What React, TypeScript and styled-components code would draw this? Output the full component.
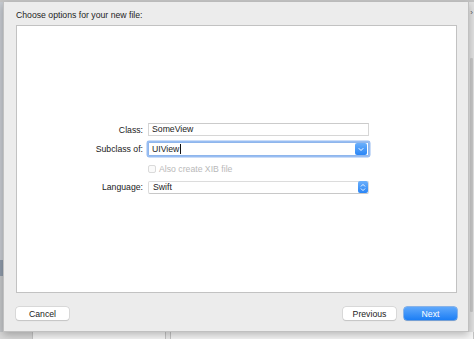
import React from "react";
import styled, { createGlobalStyle } from "styled-components";

const Global = createGlobalStyle`
  html, body { margin: 0; padding: 0; background: #d4d4d4; }
  body { font-family: "Liberation Sans", Arial, sans-serif; -webkit-font-smoothing: antialiased; }
  * { box-sizing: border-box; }
`;

const Page = styled.div`
  width: 474px;
  height: 339px;
  display: flex;
  flex-direction: column;
  overflow: hidden;
  background: #d2d2d2;
`;

const TopStrip = styled.div`
  height: 2px;
  flex: none;
  background: #c4c4c4;
`;

const Middle = styled.div`
  display: flex;
  flex: none;
  height: 330px;
`;

const LeftEdge = styled.div`
  width: 3px;
  flex: none;
  display: grid;
  grid-template-rows: 258px 16px 1fr;
  background: #c6cad0;
`;

const EdgeBand = styled.div<{ $tone: string }>`
  background: ${(p) => p.$tone};
`;

const RightEdge = styled.div`
  flex: 1;
  display: flex;
  flex-direction: column;
  align-items: flex-end;
  background: #e2e2e2;
  padding: 6px 1px 20px 0;
`;

const EdgeGlyph = styled.div`
  font-size: 8px;
  line-height: 10px;
  color: #555;
  font-family: "Liberation Sans", Arial, sans-serif;
  margin-bottom: 40px;
`;

const EdgeBar = styled.div`
  width: 3px;
  flex: 1;
  background: #c9c9c9;
  border-radius: 1px;
`;

const Dialog = styled.div`
  width: 466px;
  flex: none;
  background: #ececec;
  border: 1px solid #c0c0c0;
  border-top: none;
  box-shadow: 0 3px 8px rgba(0, 0, 0, 0.25);
  display: flex;
  flex-direction: column;
  padding: 0 11px 0 12px;
  position: relative;
  z-index: 1;
`;

const Title = styled.div`
  padding-top: 8px;
  font-size: 8.7px;
  line-height: 11px;
  height: 19px;
  color: #1e1e1e;
  margin-bottom: 4px;
`;

const ContentBox = styled.div`
  height: 268px;
  background: #ffffff;
  border: 1px solid #c2c2c2;
  padding-top: 94px;
`;

const Form = styled.div`
  display: grid;
  grid-template-columns: 126px 221px;
  grid-template-rows: 19px 19px 20px 18px;
  column-gap: 5px;
  align-items: center;
`;

const Label = styled.div`
  font-size: 8.7px;
  color: #222;
  text-align: right;
`;

const TextField = styled.div`
  height: 13px;
  background: #fff;
  border: 1px solid #d6d6d6;
  border-top-color: #cbcbcb;
  font-size: 8.7px;
  line-height: 11px;
  color: #222;
  padding-left: 3px;
`;

const ComboField = styled.div`
  height: 14px;
  display: flex;
  align-items: stretch;
  background: #fff;
  border: 1px solid #8fb6ec;
  box-shadow: 0 0 0 1.5px rgba(118, 167, 238, 0.75);
  border-radius: 1px;
  font-size: 8.7px;
  color: #222;
  margin-top: 1px;
`;

const ComboText = styled.div`
  flex: 1;
  padding-left: 3px;
  line-height: 12px;
  display: flex;
  align-items: center;
`;

const Caret = styled.span`
  display: inline-block;
  width: 1px;
  height: 10px;
  background: #111;
  margin-left: 0.5px;
`;

const BlueButton = styled.div<{ $w: number }>`
  width: ${(p) => p.$w}px;
  flex: none;
  background: linear-gradient(#6cb0fb, #2a86f6);
  border-radius: 2px;
  display: flex;
  align-items: center;
  justify-content: center;
  margin: 0 1px 0 0;
`;

const CheckRow = styled.div`
  display: flex;
  align-items: center;
  gap: 3px;
  margin-top: 1px;
`;

const Checkbox = styled.div`
  width: 8px;
  height: 8px;
  border: 1px solid #dadada;
  border-radius: 2px;
  background: #fafafa;
`;

const DisabledText = styled.div`
  font-size: 8.7px;
  color: #b9b9b9;
`;

const Popup = styled.div`
  height: 13px;
  display: flex;
  align-items: center;
  background: #fff;
  border: 1px solid #dcdcdc;
  border-bottom-color: #c8c8c8;
  border-radius: 2px;
  font-size: 8.7px;
  color: #222;
  padding: 0 0 0 4px;
`;

const PopupText = styled.div`
  flex: 1;
`;

const Stepper = styled.div`
  width: 10px;
  height: 12px;
  flex: none;
  background: linear-gradient(#6cb0fb, #2a86f6);
  border-radius: 2px;
  display: flex;
  align-items: center;
  justify-content: center;
`;

const ButtonRow = styled.div`
  display: flex;
  align-items: center;
  margin-top: 14px;
  gap: 8px;
`;

const Spacer = styled.div`
  flex: 1;
`;

const PushButton = styled.div<{ $primary?: boolean }>`
  width: 53px;
  height: 13px;
  border-radius: 3px;
  display: flex;
  align-items: center;
  justify-content: center;
  font-size: 8.7px;
  color: ${(p) => (p.$primary ? "#fff" : "#222")};
  background: ${(p) => (p.$primary ? "linear-gradient(#5fa8fb, #1c7ef5)" : "#ffffff")};
  box-shadow: ${(p) =>
    p.$primary
      ? "0 0 0 0.5px #2a7fe8, 0 0.5px 1px rgba(0,0,0,0.2)"
      : "0 0 0 0.5px #c8c8c8, 0 0.5px 1px rgba(0,0,0,0.18)"};
`;

const BottomStrip = styled.div`
  flex: 1;
  display: grid;
  grid-template-columns: 33px 133px 5px 1fr;
  background: #f4f4f4;
`;

const BottomCell = styled.div<{ $bg: string }>`
  background: ${(p) => p.$bg};
  border-right: 1px solid #c4c4c4;
`;

const DownChevron = () => (
  <svg width="6" height="5" viewBox="0 0 6 5">
    <path d="M1 1.5 L3 3.5 L5 1.5" stroke="#fff" strokeWidth="1" fill="none" strokeLinecap="round" />
  </svg>
);

const UpDownChevron = () => (
  <svg width="6" height="9" viewBox="0 0 6 9">
    <path d="M1.2 3.2 L3 1.4 L4.8 3.2 M1.2 5.8 L3 7.6 L4.8 5.8" stroke="#fff" strokeWidth="0.9" fill="none" strokeLinecap="round" />
  </svg>
);

export default function App() {
  return (
    <>
      <Global />
      <Page>
        <TopStrip />
        <Middle>
          <LeftEdge>
            <EdgeBand $tone="#c6cad0" />
            <EdgeBand $tone="#8e9aaa" />
            <EdgeBand $tone="#c4c6c9" />
          </LeftEdge>
          <Dialog>
            <Title>Choose options for your new file:</Title>
            <ContentBox>
              <Form>
                <Label>Class:</Label>
                <TextField>SomeView</TextField>
                <Label>Subclass of:</Label>
                <ComboField>
                  <ComboText>
                    UIView
                    <Caret />
                  </ComboText>
                  <BlueButton $w={12}>
                    <DownChevron />
                  </BlueButton>
                </ComboField>
                <div />
                <CheckRow>
                  <Checkbox />
                  <DisabledText>Also create XIB file</DisabledText>
                </CheckRow>
                <Label>Language:</Label>
                <Popup>
                  <PopupText>Swift</PopupText>
                  <Stepper>
                    <UpDownChevron />
                  </Stepper>
                </Popup>
              </Form>
            </ContentBox>
            <ButtonRow>
              <PushButton>Cancel</PushButton>
              <Spacer />
              <PushButton>Previous</PushButton>
              <PushButton $primary>Next</PushButton>
            </ButtonRow>
          </Dialog>
          <RightEdge>
            <EdgeGlyph>›</EdgeGlyph>
            <EdgeBar />
          </RightEdge>
        </Middle>
        <BottomStrip>
          <BottomCell $bg="#d9d9d9" />
          <BottomCell $bg="#f6f6f6" />
          <BottomCell $bg="#ececec" />
          <BottomCell $bg="#f6f6f6" />
        </BottomStrip>
      </Page>
    </>
  );
}
